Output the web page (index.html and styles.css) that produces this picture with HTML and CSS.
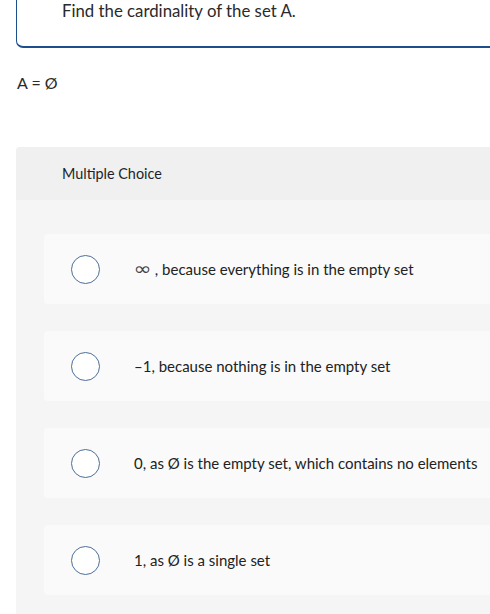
FILE: index.html
```html
<!DOCTYPE html>
<html>
<head>
<meta charset="utf-8">
<link rel="stylesheet" href="styles.css">
</head>
<body>
<div class="prompt">
  <p class="prompt-text">Find the cardinality of the set A.</p>
</div>
<p class="given">A = Ø</p>
<section class="panel">
  <div class="panel-head">Multiple Choice</div>
  <div class="panel-body">
    <div class="option"><span class="radio"></span><span class="label"><span class="inf">∞</span> , because everything is in the empty set</span></div>
    <div class="option"><span class="radio"></span><span class="label">–1, because nothing is in the empty set</span></div>
    <div class="option"><span class="radio"></span><span class="label">0, as Ø is the empty set, which contains no elements</span></div>
    <div class="option"><span class="radio"></span><span class="label">1, as Ø is a single set</span></div>
  </div>
</section>
</body>
</html>
```
FILE: styles.css
```css
html, body {
  margin: 0;
  padding: 0;
  background: #fff;
  overflow: hidden;
}
body {
  font-family: Lato, "Open Sans", sans-serif;
  color: #222;
  width: 490px;
  height: 614px;
}
.prompt {
  margin-left: 16px;
  height: 46px;
  border-left: 1px solid #1d4f8d;
  border-bottom: 2px solid #1d4f8d;
  border-bottom-left-radius: 7px;
}
.prompt-text {
  margin: 0;
  padding: 1px 0 0 45px;
  font-size: 16.8px;
  line-height: 20px;
  color: #2a2a2a;
}
.given {
  margin: 25px 0 0 17px;
  font-size: 16px;
  line-height: 20px;
  color: #2a2a2a;
}
.panel {
  margin: 54px 0 0 16px;
  background: #f5f5f5;
  border-top-left-radius: 4px;
  height: 480px;
}
.panel-head {
  height: 53px;
  background: #f0f0f0;
  border-top-left-radius: 4px;
  display: flex;
  align-items: center;
  padding-left: 46px;
  font-size: 14.4px;
  color: #1f1f2a;
}
.panel-body {
  padding: 34px 0 0 28px;
  display: flex;
  flex-direction: column;
  gap: 27px;
}
.option {
  height: 70px;
  background: #fafafa;
  border-radius: 4px 0 0 4px;
  display: flex;
  align-items: center;
  padding-left: 27px;
}
.radio {
  width: 27px;
  height: 27px;
  border: 1.6px solid #4c6f98;
  border-radius: 50%;
  background: #fff;
  flex: none;
}
.label {
  margin-left: 34px;
  font-size: 15px;
  color: #222;
}
.inf {
  display: inline-block;
  font-family: "DejaVu Sans", sans-serif;
  font-size: 18px;
  line-height: 1;
  color: #444;
  transform: scaleX(1.2);
  margin: 0 1px 0 1px;
}
```
